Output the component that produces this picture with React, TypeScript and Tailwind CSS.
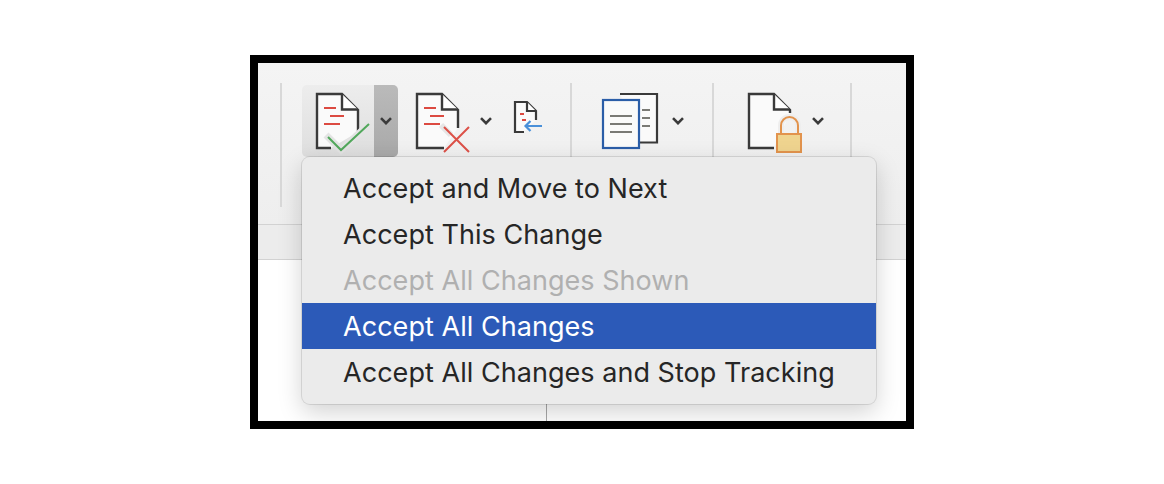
import React from 'react';

const menuItems = [
  { label: 'Accept and Move to Next' },
  { label: 'Accept This Change' },
  { label: 'Accept All Changes Shown', disabled: true },
  { label: 'Accept All Changes', active: true },
  { label: 'Accept All Changes and Stop Tracking' }
];

const Chevron = ({ className = '' }: { className?: string }) => (
  <svg width="12" height="8" viewBox="0 0 12 8" className={className}>
    <path d="M1 1.2L6 6.2L11 1.2" fill="none" stroke="#3a3a3a" strokeWidth="2.6" />
  </svg>
);

const Separator = ({ className = '' }: { className?: string }) => (
  <div className={`w-[2px] h-[124px] bg-[#d8d8d8] shrink-0 ${className}`}></div>
);

// Page with the folded corner, shared by the big icons
const PageOutline = ({ x, bottomTo, rightTo }: { x: number; bottomTo: number; rightTo: number }) => (
  <>
    <path
      d={`M${bottomTo} 148H${x}V94H${x + 25}L${x + 41} 110V${rightTo}`}
      fill="#fafafa"
      stroke="#3a3a3a"
      strokeWidth="2.4"
    />
    <path d={`M${x + 25} 94V109.5H${x + 41}`} fill="#ffffff" stroke="#3a3a3a" strokeWidth="2.4" />
  </>
);

const RedLines = ({ x }: { x: number }) => (
  <g stroke="#dc4a41" strokeWidth="2">
    <path d={`M${x + 7} 108H${x + 19}`} />
    <path d={`M${x + 13} 116H${x + 27}`} />
    <path d={`M${x + 7} 124H${x + 23}`} />
  </g>
);

const AcceptIcon = () => (
  <svg width="60" height="72" viewBox="314 85 60 72" className="shrink-0 overflow-visible">
    <PageOutline x={317} bottomTo={331} rightTo={132} />
    <RedLines x={317} />
    <path d="M326 135L341 150L369 124" fill="none" stroke="#e4e4e4" strokeWidth="7" />
    <path d="M328 137L341 150L369 124" fill="none" stroke="#52a85c" strokeWidth="2" />
  </svg>
);

const RejectIcon = () => (
  <svg width="60" height="72" viewBox="414 85 60 72" className="shrink-0 overflow-visible">
    <PageOutline x={417} bottomTo={444} rightTo={128} />
    <RedLines x={417} />
    <path d="M441 125L451 135" fill="none" stroke="#e6e6e6" strokeWidth="6" />
    <path d="M444 127L469 152M469 127L444 152" fill="none" stroke="#dc5148" strokeWidth="2" />
  </svg>
);

const PreviousIcon = () => (
  <svg width="32" height="72" viewBox="512 85 32 72" className="shrink-0">
    <path d="M524 132H515V102H527L536 111V120" fill="#fafafa" stroke="#3a3a3a" strokeWidth="2.2" />
    <path d="M527 102V111H536" fill="#ffffff" stroke="#3a3a3a" strokeWidth="2.2" />
    <path d="M520 114H524M522 120H526" stroke="#dc4a41" strokeWidth="2" />
    <path d="M542 126H526M530.5 121L525.5 126L530.5 131" fill="none" stroke="#4a90d9" strokeWidth="2.2" />
  </svg>
);

const CompareIcon = () => (
  <svg width="64" height="72" viewBox="600 85 64 72" className="shrink-0">
    <path d="M620 94H657V142.500H640" fill="#fafafa" stroke="#3a3a3a" strokeWidth="2.2" />
    <path d="M642 110H650M642 118H650M642 126H650" stroke="#7a7a75" strokeWidth="2" />
    <rect x="603" y="100" width="36" height="48" fill="#fafafa" stroke="#2b5ea8" strokeWidth="2.2" />
    <path d="M610 116H632M610 124H632M610 132H632" stroke="#7a7a75" strokeWidth="2" />
  </svg>
);

const ProtectIcon = () => (
  <svg width="60" height="72" viewBox="746 85 60 72" className="shrink-0 overflow-visible">
    <PageOutline x={749} bottomTo={774} rightTo={113} />
    <path d="M781 134V125.500A8.500 8.500 0 0 1 798 125.500V134" fill="none" stroke="#eeeeee" strokeWidth="6" />
    <path d="M781 134V125.500A8.500 8.500 0 0 1 798 125.500V134" fill="none" stroke="#e2934d" strokeWidth="2" />
    <rect x="777" y="134" width="24" height="18" fill="#efd48f" stroke="#e2934d" strokeWidth="2" />
  </svg>
);

export default function App() {
  return (
    <div className="w-[1164px] h-[484px] bg-white flex items-start justify-center pt-[55px] font-['Inter','Liberation_Sans',sans-serif]">
      <div className="relative w-[664px] h-[374px] border-8 border-black bg-white overflow-hidden">
        {/* Ribbon */}
        <div className="h-[161px] flex items-start pt-[20px] pl-[22px] bg-gradient-to-b from-[#f4f4f4] to-[#eeeeee]">
          <Separator />
          <div className="flex items-center h-[72px] mt-[2px]">
            <div className="ml-[20px] w-[96px] h-[72px] flex rounded-[5px] overflow-hidden bg-gradient-to-b from-[#ededed] to-[#dedede]">
              <div className="w-[72px] pl-[12px]">
                <AcceptIcon />
              </div>
              <div className="w-[24px] flex items-center justify-center bg-gradient-to-b from-[#bababa] to-[#a9a9a9]">
                <Chevron />
              </div>
            </div>
            <div className="ml-[16px] flex items-center">
              <RejectIcon />
              <Chevron className="ml-[6px]" />
              <div className="ml-[20px]">
                <PreviousIcon />
              </div>
            </div>
          </div>
          <Separator className="ml-[26px]" />
          <div className="flex items-center h-[72px] mt-[2px] ml-[28px]">
            <CompareIcon />
            <Chevron className="ml-[8px]" />
          </div>
          <Separator className="ml-[28px]" />
          <div className="flex items-center h-[72px] mt-[2px] ml-[32px]">
            <ProtectIcon />
            <Chevron className="ml-[6px]" />
          </div>
          <Separator className="ml-[26px]" />
        </div>

        {/* Band under the ribbon */}
        <div className="h-[36px] bg-[#ececec] border-y border-y-[#d2d2d2]"></div>

        {/* Document area */}
        <div className="flex h-[161px] bg-white">
          <div className="w-[289px] border-r border-r-[#a8a8a8]"></div>
        </div>

        {/* Dropdown */}
        <div className="absolute left-[44px] top-[94px] w-[574px] h-[247px] pt-[8px] rounded-[8px] bg-[#ebebeb] shadow-[0_0_0_1px_rgba(0,0,0,0.1),0_8px_24px_rgba(0,0,0,0.18)]">
          {menuItems.map(item => (
            <div
              key={item.label}
              className={`h-[46px] pl-[41px] pt-[2px] flex items-center text-[27px] tracking-[0.04px] ${
                item.active
                  ? 'bg-[#2c5ab8] text-white'
                  : item.disabled
                    ? 'text-[#b0b0b0]'
                    : 'text-[#262626]'
              }`}
            >
              {item.label}
            </div>
          ))}
        </div>
      </div>
    </div>
  );
}
